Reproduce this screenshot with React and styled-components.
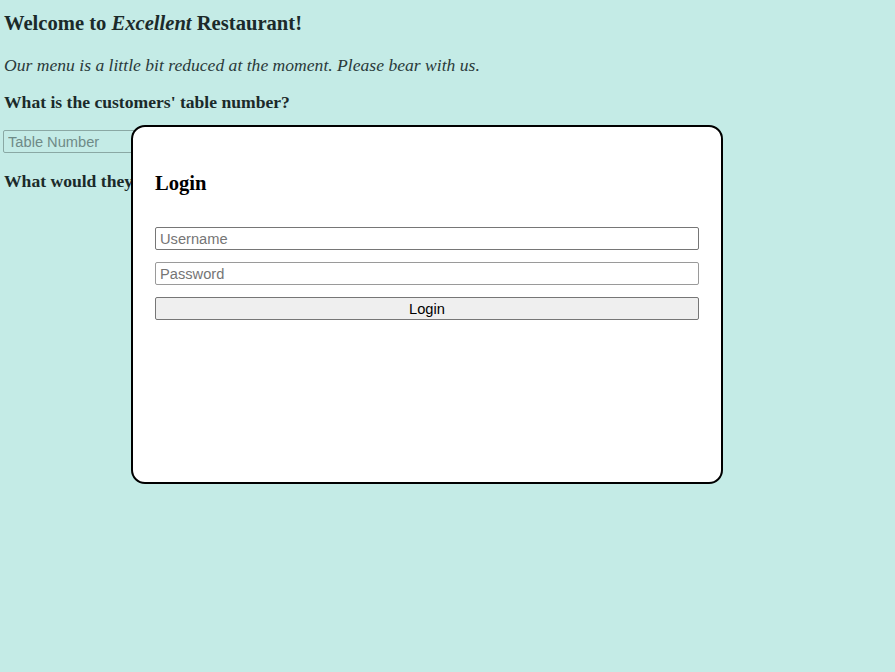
import React from 'react'
import styled, { createGlobalStyle } from 'styled-components'

const GlobalStyle = createGlobalStyle`
  html, body {
    margin: 0;
    padding: 0;
    background: #c4ebe6;
  }
  body {
    font-family: "Liberation Serif", "Times New Roman", serif;
    color: #1b2a2a;
    min-height: 672px;
  }
`

const Page = styled.div`
  padding: 12px 4px 0 4px;
`

const Title = styled.h3`
  margin: 0;
  font-size: 20.6px;
  font-weight: bold;
  line-height: 23px;
`

const Note = styled.p`
  margin: 20px 0 0 0;
  font-size: 17.6px;
  font-style: italic;
  line-height: 20px;
  color: #2a3a3a;
`

const Question = styled.h4`
  margin: ${props => props.$first ? '17px' : '18px'} 0 0 0;
  font-size: 17.6px;
  font-weight: bold;
  line-height: 20px;
`

const TableInput = styled.input`
  display: block;
  margin: 18px 0 0 -1px;
  width: 170px;
  height: 23px;
  box-sizing: border-box;
  padding: 1px 4px;
  border: 1px solid #8aa8a4;
  border-radius: 2px;
  background: transparent;
  font-family: "Liberation Sans", Arial, sans-serif;
  font-size: 14.67px;
  &::placeholder { color: #6f8a86; }
`

const Modal = styled.div`
  position: absolute;
  left: 131px;
  top: 125px;
  width: 592px;
  height: 359px;
  box-sizing: border-box;
  background: #fff;
  border: 2px solid #000;
  border-radius: 14px;
  padding: 45px 22px 0 22px;
  display: flex;
  flex-direction: column;
`

const ModalTitle = styled.h3`
  margin: 0 0 32px 0;
  font-size: 20.6px;
  font-weight: bold;
  line-height: 23px;
  color: #000;
`

const Form = styled.form`
  display: flex;
  flex-direction: column;
  gap: 12px;
`

const Field = styled.input`
  height: 23px;
  box-sizing: border-box;
  padding: 1px 4px;
  border: 1px solid ${props => props.$light ? '#9a9a9a' : '#767676'};
  border-radius: 2px;
  background: #fff;
  font-family: "Liberation Sans", Arial, sans-serif;
  font-size: 14.67px;
  &::placeholder { color: #757575; }
`

const Button = styled.button`
  height: 23px;
  box-sizing: border-box;
  border: 1px solid #767676;
  border-radius: 2px;
  background: #efefef;
  font-family: "Liberation Sans", Arial, sans-serif;
  font-size: 14.67px;
  color: #000;
  padding: 0;
`

export default function App () {
  return (
    <>
      <GlobalStyle />
      <Page>
        <Title>Welcome to <em>Excellent</em> Restaurant!</Title>
        <Note>Our menu is a little bit reduced at the moment. Please bear with us.</Note>
        <Question $first>What is the customers' table number?</Question>
        <TableInput type='text' placeholder='Table Number' />
        <Question>What would they like to order?</Question>
      </Page>
      <Modal>
        <ModalTitle>Login</ModalTitle>
        <Form onSubmit={e => e.preventDefault()}>
          <Field type='text' placeholder='Username' />
          <Field type='password' placeholder='Password' $light />
          <Button type='submit'>Login</Button>
        </Form>
      </Modal>
    </>
  )
}
